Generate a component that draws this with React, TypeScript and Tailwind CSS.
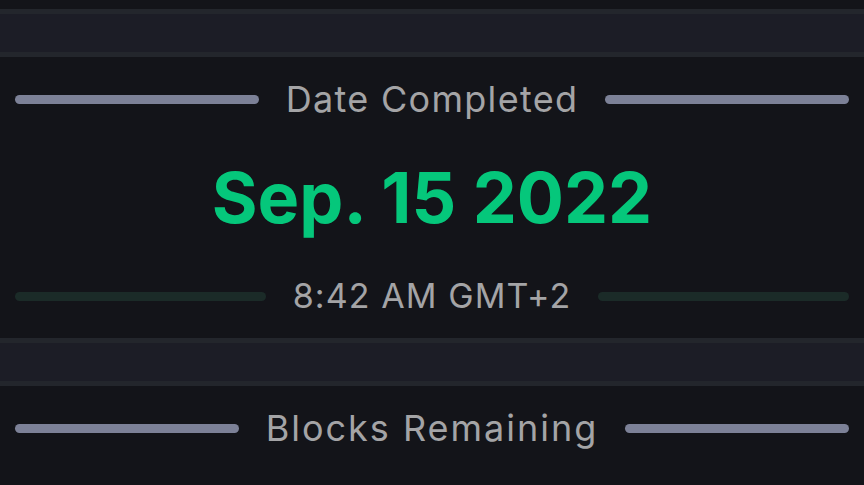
import React from 'react';

function Band() {
  return <div className="h-[48px] border-y-[5px] border-[#23262c] bg-[#1c1d26]" />;
}

function LabelRow({ label, bar, text, className }: { label: string; bar: string; text: string; className?: string }) {
  return (
    <div className={`flex items-center gap-[27px] px-[15px] ${className ?? ''}`}>
      <div className={`h-[9px] flex-1 rounded-full ${bar}`} />
      <span className={`whitespace-nowrap ${text}`}>{label}</span>
      <div className={`h-[9px] flex-1 rounded-full ${bar}`} />
    </div>
  );
}

export default function App() {
  return (
    <div className="min-h-screen overflow-hidden bg-[#131419] pt-[9px]" style={{ fontFamily: 'Inter, "Noto Sans", sans-serif' }}>
      <Band />
      <section className="flex flex-col pt-[20px] pb-[20px]">
        <LabelRow
          label="Date Completed"
          bar="bg-[#7c8197]"
          text="text-[36px] leading-[44px] tracking-[1.3px] text-[#a4a4a6]"
        />
        <div className="mt-[35px] text-center text-[70px] font-bold leading-[84px] text-[#05c77b]">
          Sep. 15 2022
        </div>
        <LabelRow
          className="mt-[34px]"
          label="8:42 AM GMT+2"
          bar="bg-[#1b2b28]"
          text="text-[34px] leading-[44px] tracking-[1.1px] text-[#a4a4a6]"
        />
      </section>
      <Band />
      <section className="pt-[20px]">
        <LabelRow
          label="Blocks Remaining"
          bar="bg-[#7c8197]"
          text="text-[36px] leading-[44px] tracking-[2px] text-[#a4a4a6]"
        />
      </section>
    </div>
  );
}
